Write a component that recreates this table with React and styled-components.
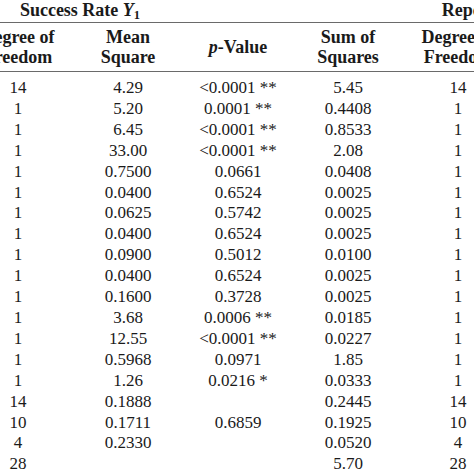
import React from 'react';
import styled, { createGlobalStyle } from 'styled-components';

const GlobalStyle = createGlobalStyle`
  html, body {
    margin: 0;
    padding: 0;
    background: #ffffff;
  }
`;

const Frame = styled.div`
  width: 474px;
  height: 474px;
  overflow: hidden;
  background: #ffffff;
  font-family: "Liberation Serif", "Times New Roman", serif;
  color: #1a1a1a;
`;

const Table = styled.table`
  border-collapse: collapse;
  table-layout: fixed;
  margin-left: -133px;
  width: 866px;
`;

const GroupCell = styled.th`
  font-size: 18px;
  font-weight: bold;
  line-height: 20px;
  padding: 0 ${p => p.$shift || 0}px 2px 0;
  text-align: center;
  white-space: nowrap;
  border-bottom: 1px solid #6a6a6a;
`;

const HeadCell = styled.th`
  font-size: 18px;
  font-weight: bold;
  line-height: 20px;
  padding: 4px 0;
  text-align: center;
  vertical-align: middle;
  white-space: nowrap;
  border-bottom: 1px solid #6a6a6a;
`;

const Row = styled.tr`
  td {
    padding-top: ${p => (p.$first ? '6px' : '0')};
  }
`;

const Cell = styled.td`
  font-size: 17px;
  line-height: 20.9px;
  padding: 0;
  text-align: center;
  white-space: nowrap;
`;

const Ital = styled.i`
  font-style: italic;
`;

const Sub = styled.sub`
  font-size: 0.7em;
  line-height: 0;
  vertical-align: -0.25em;
`;

const ROWS = [
  ['14', '4.29', '<0.0001 **', '5.45', '14'],
  ['1', '5.20', '0.0001 **', '0.4408', '1'],
  ['1', '6.45', '<0.0001 **', '0.8533', '1'],
  ['1', '33.00', '<0.0001 **', '2.08', '1'],
  ['1', '0.7500', '0.0661', '0.0408', '1'],
  ['1', '0.0400', '0.6524', '0.0025', '1'],
  ['1', '0.0625', '0.5742', '0.0025', '1'],
  ['1', '0.0400', '0.6524', '0.0025', '1'],
  ['1', '0.0900', '0.5012', '0.0100', '1'],
  ['1', '0.0400', '0.6524', '0.0025', '1'],
  ['1', '0.1600', '0.3728', '0.0025', '1'],
  ['1', '3.68', '0.0006 **', '0.0185', '1'],
  ['1', '12.55', '<0.0001 **', '0.0227', '1'],
  ['1', '0.5968', '0.0971', '1.85', '1'],
  ['1', '1.26', '0.0216 *', '0.0333', '1'],
  ['14', '0.1888', '', '0.2445', '14'],
  ['10', '0.1711', '0.6859', '0.1925', '10'],
  ['4', '0.2330', '', '0.0520', '4'],
  ['28', '', '', '5.70', '28'],
];

const App = () => (
  <>
    <GlobalStyle />
    <Frame>
      <Table>
        <colgroup>
          <col style={{ width: 96 }} />
          <col style={{ width: 110 }} />
          <col style={{ width: 110 }} />
          <col style={{ width: 110 }} />
          <col style={{ width: 110 }} />
          <col style={{ width: 110 }} />
          <col style={{ width: 110 }} />
          <col style={{ width: 110 }} />
        </colgroup>
        <thead>
          <tr>
            <GroupCell colSpan={4}>
              Success Rate <Ital>Y</Ital><Sub>1</Sub>
            </GroupCell>
            <GroupCell colSpan={4} $shift={18}>
              Repeatability <Ital>Y</Ital><Sub>2</Sub>
            </GroupCell>
          </tr>
          <tr>
            <HeadCell>Sum of<br />Squares</HeadCell>
            <HeadCell>Degree of<br />Freedom</HeadCell>
            <HeadCell>Mean<br />Square</HeadCell>
            <HeadCell><Ital>p</Ital>-Value</HeadCell>
            <HeadCell>Sum of<br />Squares</HeadCell>
            <HeadCell>Degree of<br />Freedom</HeadCell>
            <HeadCell>Mean<br />Square</HeadCell>
            <HeadCell><Ital>p</Ital>-Value</HeadCell>
          </tr>
        </thead>
        <tbody>
          {ROWS.map((r, i) => (
            <Row key={i} $first={i === 0}>
              <Cell />
              {r.map((v, j) => (
                <Cell key={j}>{v}</Cell>
              ))}
              <Cell />
              <Cell />
            </Row>
          ))}
        </tbody>
      </Table>
    </Frame>
  </>
);

export default App;
